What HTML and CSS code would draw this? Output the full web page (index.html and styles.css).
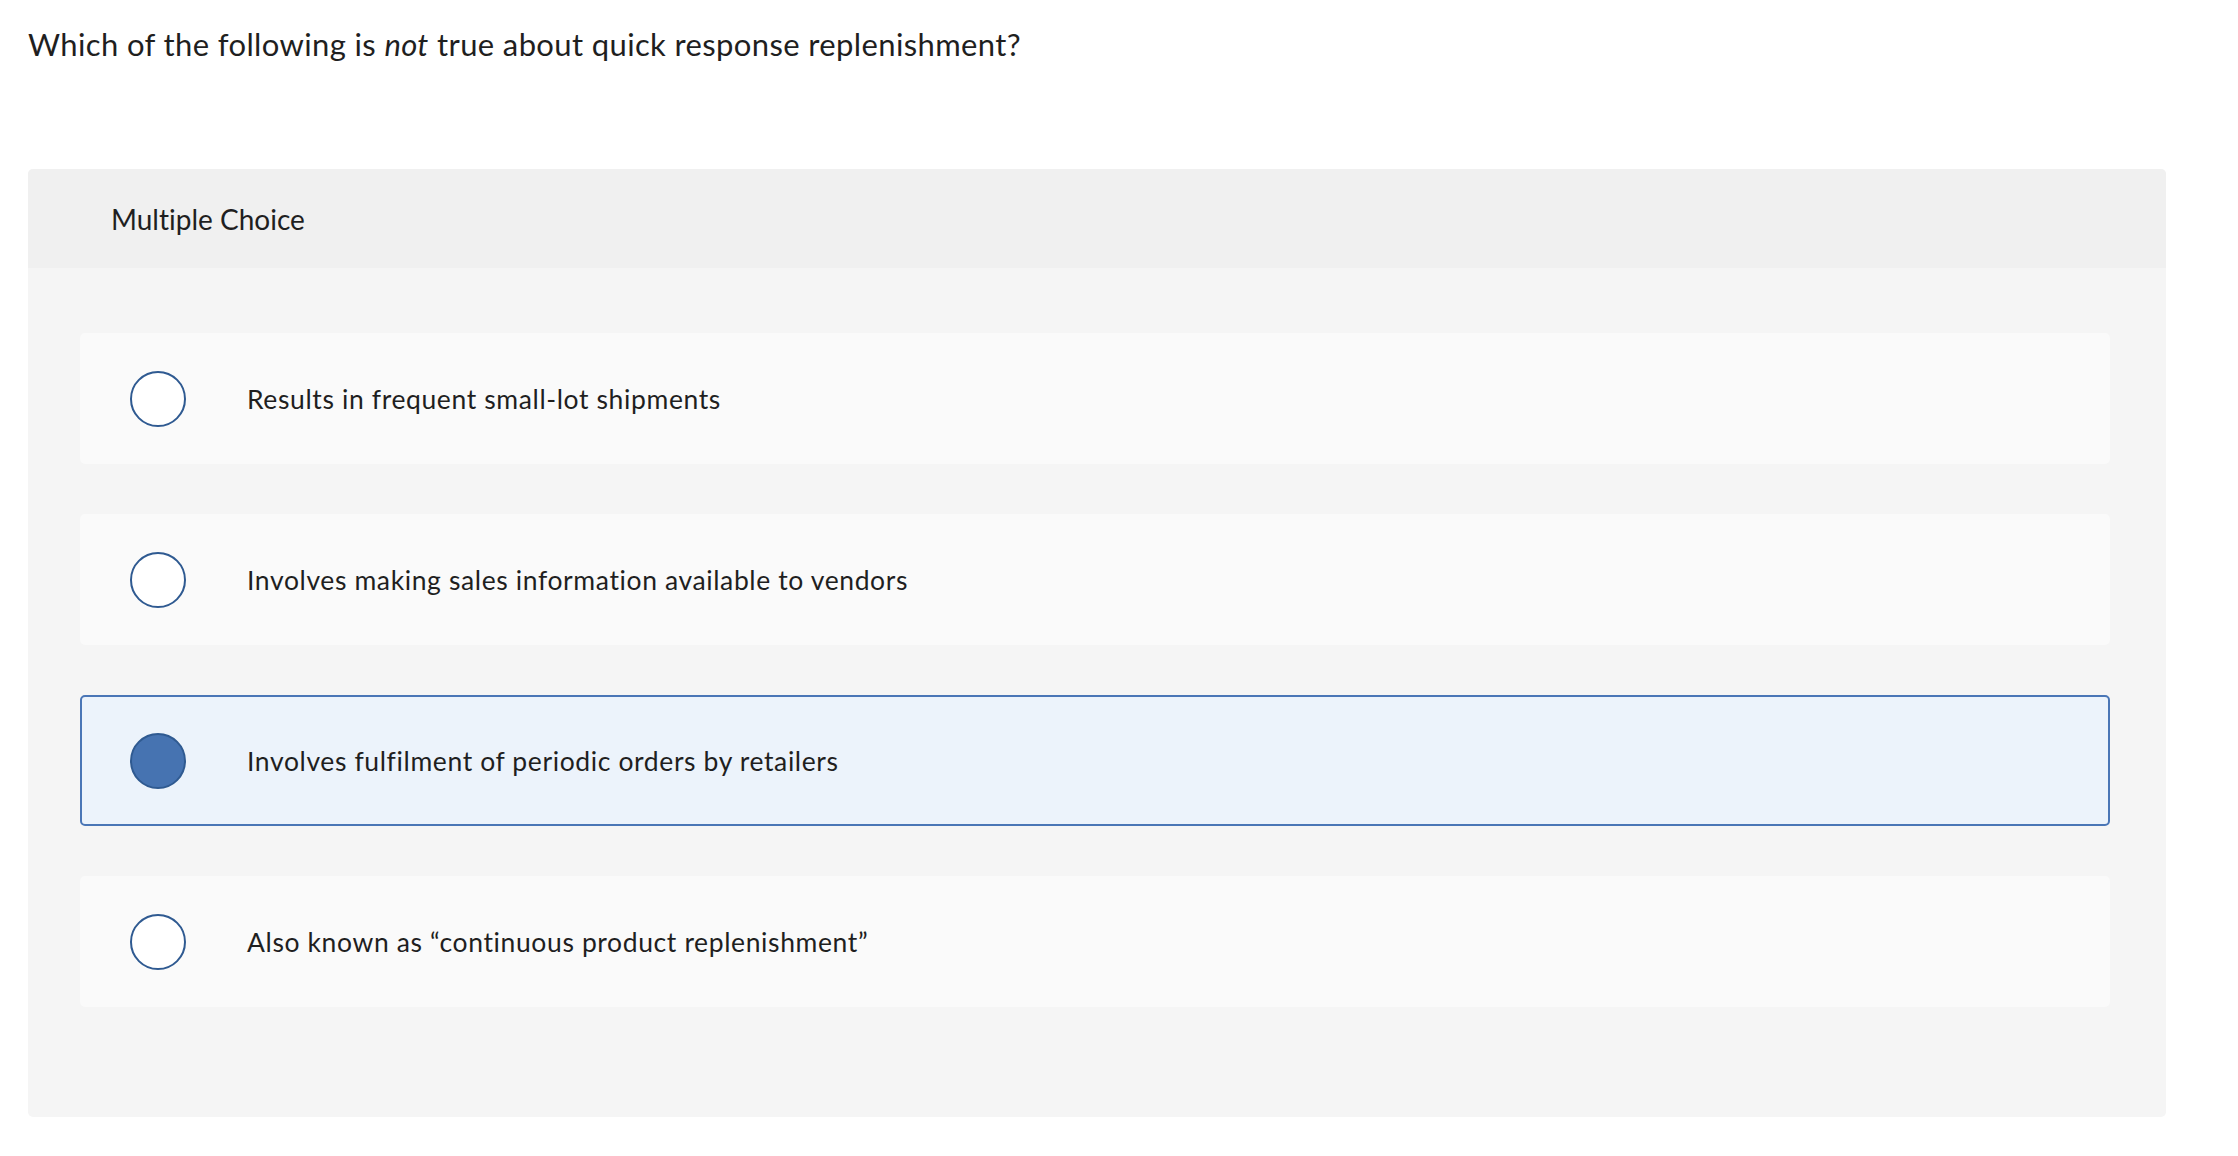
FILE: index.html
```html
<!DOCTYPE html>
<html lang="en">
<head>
<meta charset="utf-8">
<title>Multiple Choice</title>
<link rel="stylesheet" href="styles.css">
</head>
<body>
<div class="page">
  <p class="question">Which of the following is <em>not</em> true about quick response replenishment?</p>
  <section class="panel">
    <header class="panel-head">Multiple Choice</header>
    <div class="choices">
      <label class="choice">
        <span class="radio"></span>
        <span class="choice-text">Results in frequent small-lot shipments</span>
      </label>
      <label class="choice">
        <span class="radio"></span>
        <span class="choice-text">Involves making sales information available to vendors</span>
      </label>
      <label class="choice selected">
        <span class="radio"></span>
        <span class="choice-text">Involves fulfilment of periodic orders by retailers</span>
      </label>
      <label class="choice">
        <span class="radio"></span>
        <span class="choice-text">Also known as “continuous product replenishment”</span>
      </label>
    </div>
  </section>
</div>
</body>
</html>
```

FILE: styles.css
```css
html, body {
  margin: 0;
  padding: 0;
  background: #ffffff;
}

body {
  font-family: "Lato", "Liberation Sans", sans-serif;
  font-variant-ligatures: none;
  color: #1f1f1f;
}

.page {
  padding: 0 72px 0 28px;
}

.question {
  margin: 0;
  padding-top: 26px;
  font-size: 31px;
  line-height: 36px;
  letter-spacing: 0.37px;
}

.question em {
  font-style: italic;
}

.panel {
  margin-top: 107px;
  background: #f5f5f5;
  border-radius: 5px;
  overflow: hidden;
}

.panel-head {
  height: 99px;
  display: flex;
  align-items: center;
  padding-left: 83px;
  background: #f0f0f0;
  font-size: 28px;
}

.choices {
  display: flex;
  flex-direction: column;
  gap: 50px;
  padding: 65px 56px 110px 52px;
}

.choice {
  display: flex;
  align-items: center;
  height: 131px;
  box-sizing: border-box;
  padding-left: 50px;
  background: #fafafa;
  border-radius: 5px;
  font-size: 26.5px;
  letter-spacing: 0.62px;
}

.choice.selected {
  background: #ecf3fb;
  border: 2px solid #4a76b6;
  padding-left: 48px;
}

.radio {
  width: 56px;
  height: 56px;
  box-sizing: border-box;
  border: 2.5px solid #2f5a91;
  border-radius: 50%;
  background: #ffffff;
  flex: none;
}

.choice.selected .radio {
  background: #4673b1;
  border-color: #2f5a91;
}

.choice-text {
  margin-left: 61px;
}
```
